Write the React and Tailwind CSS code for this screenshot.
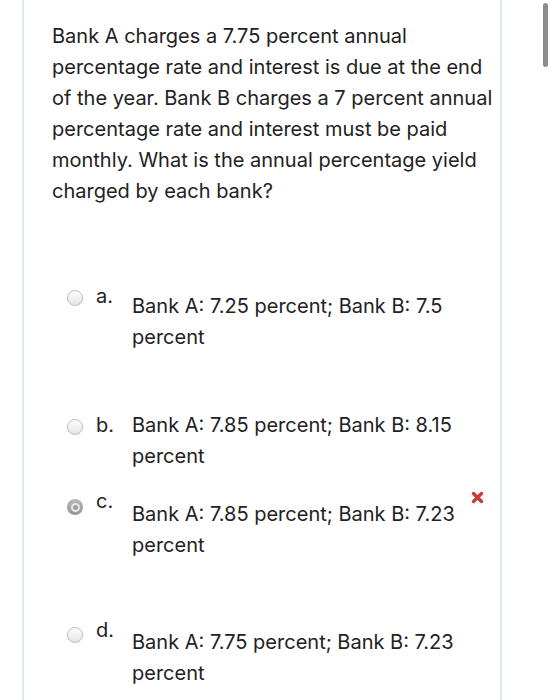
import React from 'react';

const options = [
  { key: 'a', text: 'Bank A: 7.25 percent; Bank B: 7.5 percent', mt: 'mt-[74px]', textTop: 'mt-[10px]', radioTop: 'mt-[9px]' },
  { key: 'b', text: 'Bank A: 7.85 percent; Bank B: 8.15 percent', mt: 'mt-[57px]', textTop: 'mt-0', radioTop: 'mt-[9px]' },
  { key: 'c', text: 'Bank A: 7.85 percent; Bank B: 7.23 percent', mt: 'mt-[14px]', textTop: 'mt-[13px]', radioTop: 'mt-[13px]', checked: true, wrong: true },
  { key: 'd', text: 'Bank A: 7.75 percent; Bank B: 7.23 percent', mt: 'mt-[54px]', textTop: 'mt-[12px]', radioTop: 'mt-[12px]' },
];

const Radio = ({ checked }) =>
  checked ? (
    <div className="w-4 h-4 rounded-full bg-gradient-to-b from-[#b8b8b8] to-[#939393] flex items-center justify-center">
      <div className="w-[9px] h-[9px] rounded-full bg-[#e6e6e6] flex items-center justify-center">
        <div className="w-[5px] h-[5px] rounded-full bg-[#a0a0a0]" />
      </div>
    </div>
  ) : (
    <div className="w-4 h-4 rounded-full border border-[#bdbdbd] bg-gradient-to-b from-white to-[#e4e4e4]" />
  );

const WrongMark = () => (
  <svg width="13" height="13" viewBox="0 0 13 13" className="absolute left-[419px] top-[5px]">
    <path d="M2.5 2.5 L10.5 10.5 M10.5 2.5 L2.5 10.5" stroke="#cc3b3b" strokeWidth="3.4" strokeLinecap="round" />
  </svg>
);

export default function App() {
  return (
    <div className="relative w-full h-[700px] bg-white overflow-hidden text-[#222] text-[20px] leading-[31px]" style={{ fontFamily: 'Inter, "Liberation Sans", sans-serif' }}>
      <div className="ml-[22px] w-[480px] h-full border-x-2 border-[#e0e8ee] pl-[28px] pr-[4px] pt-[21px]">
        <p>
          Bank A charges a 7.75 percent annual percentage rate and interest is due at the end of the year. Bank B charges a 7 percent annual percentage rate and interest must be paid monthly. What is the annual percentage yield charged by each bank?
        </p>

        {options.map((o) => (
          <div key={o.key} className={`relative flex items-start ${o.mt}`}>
            <div className={`ml-[15px] ${o.radioTop}`}>
              <Radio checked={o.checked} />
            </div>
            <span className="ml-[13px] w-[36px] shrink-0">{o.key}.</span>
            <div className={`w-[330px] ${o.textTop}`}>{o.text}</div>
            {o.wrong && <WrongMark />}
          </div>
        ))}
      </div>
      <div className="absolute right-[4px] top-[3px] w-[5px] h-[64px] rounded-full bg-[#8c8c8c]" />
    </div>
  );
}
